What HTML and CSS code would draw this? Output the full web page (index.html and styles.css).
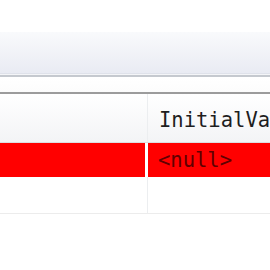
FILE: index.html
```html
<!DOCTYPE html>
<html>
<head>
<meta charset="utf-8">
<link rel="stylesheet" href="styles.css">
</head>
<body>
<div class="top"></div>
<div class="band"></div>
<div class="sep"></div>
<div class="gap"></div>
<div class="grid">
  <div class="row head">
    <div class="cell c1"></div>
    <div class="cell c2">InitialVa</div>
  </div>
  <div class="row sel">
    <div class="cell c1"></div>
    <div class="cell c2">&lt;null&gt;</div>
  </div>
  <div class="row empty">
    <div class="cell c1"></div>
    <div class="cell c2"></div>
  </div>
</div>
</body>
</html>
```
FILE: styles.css
```css
html, body { margin: 0; padding: 0; background: #fff; overflow: hidden; }
body { width: 270px; height: 270px; font-family: "DejaVu Sans Mono", monospace; }
.top { height: 32px; background: #fff; }
.band { height: 41px; background: linear-gradient(#f9fafc, #e9ebf3); }
.sep { height: 4px; border-top: 1px solid #dfe2ea; border-bottom: 2px solid #c5c9cf; box-sizing: border-box; background: #f4f5f8; }
.gap { height: 15px; background: linear-gradient(#ffffff, #fcfcfc); }
.grid { border-top: 2px solid #9c9c9c; }
.row { display: grid; grid-template-columns: 148px 1fr; }
.cell { font-size: 20.5px; color: #1e1e1e; white-space: nowrap; overflow: hidden; display: flex; align-items: center; }
.c1 { border-right: 1px solid #eceef0; }
.head { height: 48px; background: linear-gradient(#ffffff, #f3f4f6); border-bottom: 1px solid #dcdde0; }
.head .c2 { padding-left: 11px; padding-top: 4px; }
.sel { height: 34px; background: #fff; }
.sel .cell { background: #ff0000; color: #600000; }
.sel .c1 { border-right: 5px solid #fff; width: 145px; }
.sel .c2 { padding-left: 10px; }
.empty { height: 36px; border-bottom: 1px solid #ececec; }
```
